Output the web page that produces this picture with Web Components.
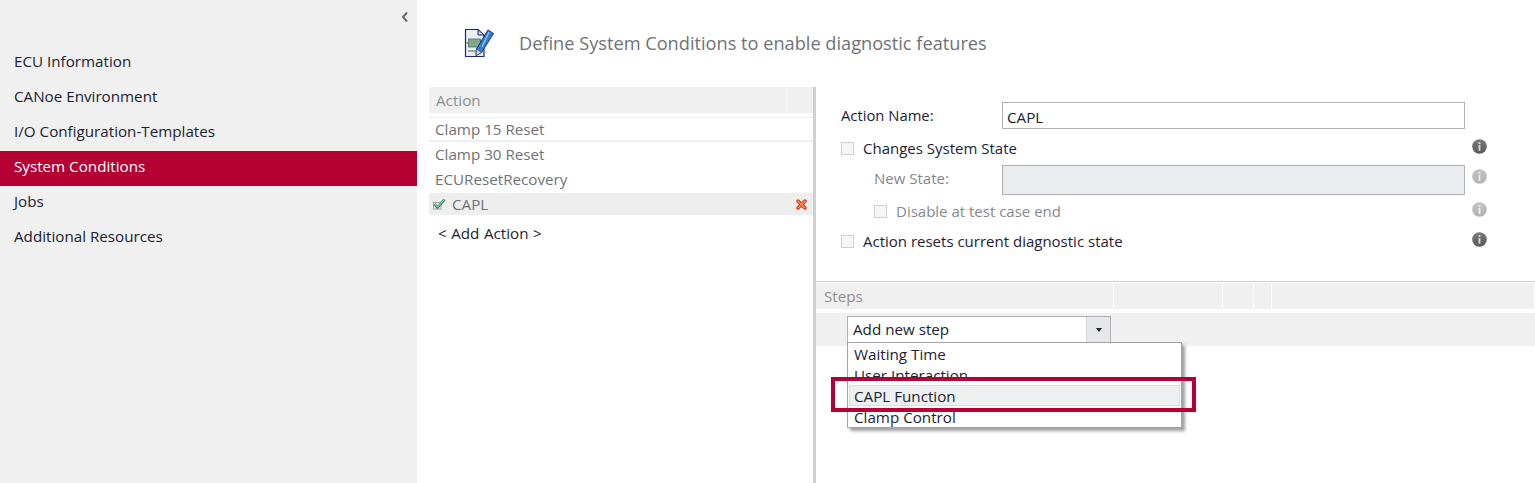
<!DOCTYPE html>
<html>
<head>
<meta charset="utf-8">
<title>System Conditions</title>
<style>
html, body { margin: 0; height: 483px; overflow: hidden; background: #fff; }
body { font-family: "Open Sans", "Noto Sans", sans-serif; font-size: 15.2px; color: #1c2233; }
</style>
</head>
<body>
<app-shell>
  <side-nav slot="nav">
    <nav-item>ECU Information</nav-item>
    <nav-item>CANoe Environment</nav-item>
    <nav-item>I/O Configuration-Templates</nav-item>
    <nav-item active>System Conditions</nav-item>
    <nav-item>Jobs</nav-item>
    <nav-item>Additional Resources</nav-item>
  </side-nav>
  <page-header slot="header">Define System Conditions to enable diagnostic features</page-header>
  <action-list slot="list">
    <action-row>Clamp 15 Reset</action-row>
    <action-row>Clamp 30 Reset</action-row>
    <action-row>ECUResetRecovery</action-row>
    <action-row selected>CAPL</action-row>
  </action-list>
  <action-form slot="form"></action-form>
  <steps-panel slot="form"></steps-panel>
</app-shell>

<script>
class AppShell extends HTMLElement {
    constructor(){
        super();
        this.attachShadow({mode: "open"}).innerHTML = `
        <style>
        :host { display: grid; grid-template-columns: 417px 1fr; height: 483px; }
        .main { display: flex; flex-direction: column; min-width: 0; }
        .panes { flex: 1; display: grid; grid-template-columns: 384px 3px 1fr; padding-left: 12px; min-height: 0; }
        .split { background: #d0d0d0; }
        .right { display: flex; flex-direction: column; min-width: 0; }
        </style>
        <slot name="nav"></slot>
        <div class="main">
            <slot name="header"></slot>
            <div class="panes">
                <slot name="list"></slot>
                <div class="split"></div>
                <div class="right"><slot name="form"></slot></div>
            </div>
        </div>`;
    }
}

class SideNav extends HTMLElement {
    constructor(){
        super();
        this.attachShadow({mode: "open"}).innerHTML = `
        <style>
        :host { display: block; background: #f0f0f0; }
        .top { height: 46px; display: flex; justify-content: flex-end; align-items: flex-start; padding: 11px 7px 0 0; box-sizing: border-box; }
        svg { width: 10px; height: 12px; }
        </style>
        <div class="top">
            <svg viewBox="0 0 10 12"><path d="M7 1.5 L3 6 L7 10.5" fill="none" stroke="#6a6a6a" stroke-width="2"/></svg>
        </div>
        <slot></slot>`;
    }
}

class NavItem extends HTMLElement {
    constructor(){
        super();
        this.attachShadow({mode: "open"}).innerHTML = `
        <style>
        :host { display: block; height: 35px; line-height: 31px; padding-left: 14px; color: #1c2233; }
        :host([active]) { background: #b40032; color: #fff; }
        </style>
        <slot></slot>`;
    }
}

class PageHeader extends HTMLElement {
    constructor(){
        super();
        this.attachShadow({mode: "open"}).innerHTML = `
        <style>
        :host { display: flex; align-items: center; height: 87px; padding: 0 0 2px 46px; box-sizing: border-box; color: #6f7276; font-size: 18.2px; }
        svg { width: 32px; height: 32px; margin-right: 24px; flex: none; }
        </style>
        <svg viewBox="0 0 32 32">
            <path d="M2.5 2.5 H15 L21 8 V29.5 H2.5 Z" fill="#eaeef6" stroke="#1c2a6e" stroke-width="1.2"/>
            <path d="M15 2.5 V8 H21 Z" fill="#c9d3e6" stroke="#1c2a6e" stroke-width="1"/>
            <rect x="5.5" y="12" width="12" height="8" fill="#7fa88c" stroke="#4c6f5a" stroke-width=".8"/>
            <path d="M3 16 H5.5 M17.5 15 H21 M5 24 H14" stroke="#4c6f5a" stroke-width="1"/>
            <path d="M25 3 L30.5 6.5 L18.5 25.5 L13 28.5 L13.5 22 Z" fill="#2f7fd0" stroke="#17306e" stroke-width="1"/>
            <path d="M26 5 L19 20" stroke="#8cc2f0" stroke-width="1.4"/>
            <path d="M13.5 22 L18.5 25.5 L13 28.5 Z" fill="#f0d9b0" stroke="#17306e" stroke-width=".6"/>
        </svg>
        <slot></slot>`;
    }
}

class ActionList extends HTMLElement {
    constructor(){
        super();
        this.attachShadow({mode: "open"}).innerHTML = `
        <style>
        :host { display: block; min-width: 0; }
        .head { height: 26px; display: grid; grid-template-columns: 1fr 26px; background: #f0f0f0; color: #8c8f93; line-height: 27px; margin-bottom: 5px; }
        .head span:first-child { padding-left: 7px; border-right: 1px solid #fff; }
        .add { display: block; padding: 2px 0 0 9px; color: #1c2233; line-height: 26px; word-spacing: .6px; }
        </style>
        <div class="head"><span>Action</span><span></span></div>
        <slot></slot>
        <span class="add">&lt; Add Action &gt;</span>`;
    }
}

class ActionRow extends HTMLElement {
    constructor(){
        super();
        const selected = this.hasAttribute("selected");
        this.attachShadow({mode: "open"}).innerHTML = `
        <style>
        :host { display: flex; align-items: center; height: 22px; margin-bottom: 3px; padding-left: 6px; color: #6f7276; }
        :host(:first-of-type) { box-shadow: 0 -1px 0 #eee, 0 2px 0 #eee; }
        :host([selected]) { background: #eeeeee; }
        svg.ok { width: 14px; height: 12px; margin: 0 6px 0 -3px; }
        svg.del { width: 11px; height: 11px; margin-left: auto; margin-right: 6px; }
        </style>
        ${selected ? `<svg class="ok" viewBox="0 0 14 12"><rect x="1.5" y="4.5" width="7.5" height="6.5" fill="#e8e8e8" stroke="#a8a8a8"/><path d="M2.5 6 L5.5 9.5 L12.5 1.5" fill="none" stroke="#2f8a62" stroke-width="2.6"/><path d="M2.8 6 L5.5 9.2 L12.2 1.6" fill="none" stroke="#a8e0c0" stroke-width=".9"/></svg>` : ""}
        <slot></slot>
        ${selected ? `<svg class="del" viewBox="0 0 11 11"><path d="M2 2 L9 9 M9 2 L2 9" stroke="#d8330f" stroke-width="3.4" stroke-linecap="round"/><path d="M2 2 L9 9 M9 2 L2 9" stroke="#f7a25e" stroke-width="1.2" stroke-linecap="round"/></svg>` : ""}`;
    }
}

class CheckBox extends HTMLElement {
    constructor(){
        super();
        this.attachShadow({mode: "open"}).innerHTML = `
        <style>
        :host { display: flex; align-items: center; gap: 9px; }
        i { width: 11px; height: 11px; border: 1px solid #d0d0d0; background: #f6f6f6; display: block; flex: none; }
        :host([disabled]) { color: #85888d; }
        </style>
        <i></i><slot></slot>`;
    }
}

class InfoIcon extends HTMLElement {
    constructor(){
        super();
        this.attachShadow({mode: "open"}).innerHTML = `
        <style>
        :host { display: block; width: 15px; height: 15px; }
        :host([disabled]) { opacity: .45; }
        svg { display: block; }
        </style>
        <svg width="15" height="15" viewBox="0 0 15 15">
            <defs><linearGradient id="g" x1="0" y1="0" x2="0" y2="1"><stop offset="0" stop-color="#7c7c7c"/><stop offset="1" stop-color="#585858"/></linearGradient></defs>
            <circle cx="7.5" cy="7.5" r="7.3" fill="url(#g)"/>
            <rect x="6.6" y="6" width="1.8" height="5.8" fill="#dcdcdc"/>
            <rect x="6.6" y="3.2" width="1.8" height="1.8" fill="#dcdcdc"/>
        </svg>`;
    }
}

class ActionForm extends HTMLElement {
    constructor(){
        super();
        this.attachShadow({mode: "open"}).innerHTML = `
        <style>
        :host { display: block; height: 195px; border-bottom: 1px solid #d0d0d0; box-sizing: border-box; padding: 15px 48px 0 25px; color: #1c2233; font-size: 15px; }
        .row { display: grid; grid-template-columns: 161px 463px 1fr; align-items: center; }
        .field { height: 27px; border: 1px solid #b0b0b4; box-sizing: border-box; background: #fff; padding-left: 4px; line-height: 28px; font-size: 15.2px; }
        .field.off { background: #ebecef; height: 30px; }
        info-icon { justify-self: end; margin-bottom: 4px; }
        .row info-icon { margin-bottom: 7px; }
        .wide { display: flex; justify-content: space-between; align-items: center; height: 24px; }
        .sub { color: #85888d; padding: 0 0 5px 33px; }
        .name { font-size: 14.8px; padding-bottom: 2px; }
        </style>
        <div class="row" style="margin-bottom:7px"><span class="name">Action Name:</span><div class="field">CAPL</div></div>
        <div class="wide" style="margin-bottom:5px"><check-box>Changes System State</check-box><info-icon></info-icon></div>
        <div class="row" style="margin-bottom:4px"><span class="sub">New State:</span><div class="field off"></div><info-icon disabled></info-icon></div>
        <div class="wide" style="margin:0 0 6px 33px"><check-box disabled>Disable at test case end</check-box><info-icon disabled></info-icon></div>
        <div class="wide"><check-box>Action resets current diagnostic state</check-box><info-icon></info-icon></div>`;
    }
}

class StepsPanel extends HTMLElement {
    constructor(){
        super();
        this.attachShadow({mode: "open"}).innerHTML = `
        <style>
        :host { display: block; position: relative; flex: 1; }
        .head { height: 26px; margin-top: 1px; display: grid; grid-template-columns: 298px 109px 31px 18px 1fr; background: #f0f0f0; color: #8c8f93; line-height: 27px; }
        .head span { border-right: 1px solid #fff; }
        .head span:first-child { padding-left: 8px; }
        .bar { margin-top: 4px; height: 33px; background: #f0f0f0; padding: 3px 0 0 31px; box-sizing: border-box; }
        .combo { width: 264px; height: 27px; display: flex; border: 1px solid #b0b0b4; box-sizing: border-box; background: #fff; line-height: 24px; color: #1c2233; }
        .combo b { flex: 1; font-weight: normal; padding-left: 5px; }
        .combo i { width: 23px; background: #e6e7ea; border-left: 1px solid #d4d4d8; display: flex; align-items: center; justify-content: center; }
        .combo i::after { content: ""; border: 3.5px solid transparent; border-top: 4px solid #222; border-bottom: 0; }
        .pop { position: absolute; left: 31px; top: 60px; width: 335px; height: 86px; border: 1px solid #a4a4a8; box-sizing: border-box; background: #fff; box-shadow: 3px 3px 3px #a0a0a0; line-height: 22px; color: #1c2233; }
        .pop div { height: 21px; padding-left: 5px; margin: 0 1px; white-space: nowrap; }
        .pop .hot { background: #eeeff1; outline: 1px solid #dcdcde; outline-offset: -1px; }
        .mark { position: absolute; left: 15px; top: 95px; width: 365px; height: 35px; border: 4px solid #b40032; box-sizing: border-box; pointer-events: none; }
        </style>
        <div class="head"><span>Steps</span><span></span><span></span><span></span><span></span></div>
        <div class="bar"><div class="combo"><b>Add new step</b><i></i></div></div>
        <div class="pop">
            <div>Waiting Time</div>
            <div>User Interaction</div>
            <div class="hot">CAPL Function</div>
            <div>Clamp Control</div>
        </div>
        <div class="mark"></div>`;
    }
}

customElements.define("app-shell", AppShell);
customElements.define("side-nav", SideNav);
customElements.define("nav-item", NavItem);
customElements.define("page-header", PageHeader);
customElements.define("action-list", ActionList);
customElements.define("action-row", ActionRow);
customElements.define("check-box", CheckBox);
customElements.define("info-icon", InfoIcon);
customElements.define("action-form", ActionForm);
customElements.define("steps-panel", StepsPanel);
</script>
</body>
</html>
